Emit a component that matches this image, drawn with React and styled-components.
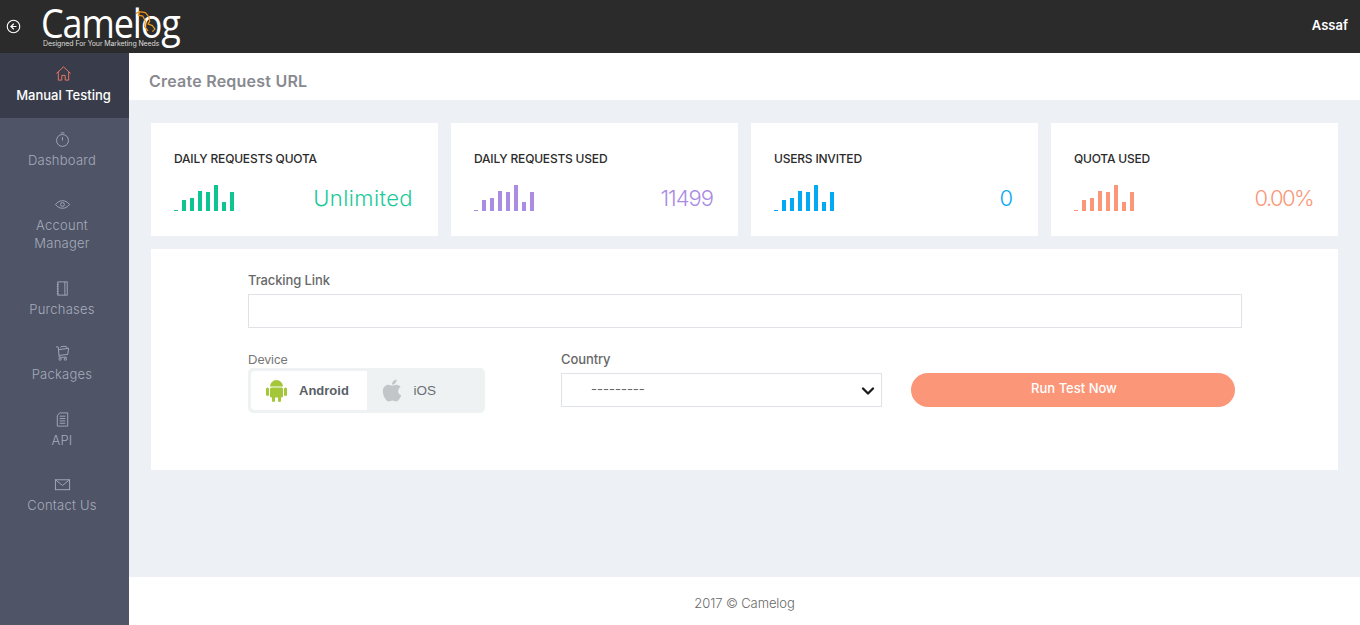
import styled, { createGlobalStyle } from "styled-components";
import { CircleArrowLeft, ChevronDown } from "lucide-react";
import { FaApple } from "react-icons/fa";

const font = `Inter, "Noto Sans", "Liberation Sans", sans-serif`;

const icons = {
  home: (
    <>
      <path d="M1.5 9 9 2l7.5 7" />
      <path d="M3.5 7.5V16h3.7v-5h3.6v5h3.7V7.5" />
    </>
  ),
  watch: (
    <>
      <circle cx="9" cy="10" r="6.3" />
      <path d="M7 2h4M9 6.5V10" />
    </>
  ),
  eye: (
    <>
      <path d="M1.5 9C4 6 6.500 5 9 5s5 1 7.500 4c-2.500 3-5 4-7.500 4s-5-1-7.500-4Z" />
      <circle cx="9" cy="9" r="2" />
    </>
  ),
  book: (
    <>
      <rect x="4" y="2" width="10" height="14" />
      <path d="M11.500 2v14M3 4.500h2M3 7h2M3 9.500h2M3 12h2M3 14.500h2" />
    </>
  ),
  cart: (
    <>
      <path d="M2 2h2.500l1 11h8" />
      <path d="M4.700 5 15.500 3.500l-1 6.500-9 1" />
      <path d="M7 3 8 1.500h5L14 3.500" />
      <circle cx="6.500" cy="15" r="1.200" />
      <circle cx="12" cy="15" r="1.200" />
    </>
  ),
  doc: (
    <>
      <path d="M6 2h8.500v14h-11V5Z" />
      <path d="M6 5.500h6M6 8h6M6 10.500h6M6 13h6" />
    </>
  ),
  mail: (
    <>
      <rect x="1.500" y="4" width="15" height="10.500" />
      <path d="M1.500 4 9 10l7.500-6" />
    </>
  ),
};

const menu = [
  { icon: "home", label: "Manual Testing", active: true },
  { icon: "watch", label: "Dashboard" },
  { icon: "eye", label: "Account Manager" },
  { icon: "book", label: "Purchases" },
  { icon: "cart", label: "Packages" },
  { icon: "doc", label: "API" },
  { icon: "mail", label: "Contact Us" },
];

const stats = [
  { title: "DAILY REQUESTS QUOTA", value: "Unlimited", bar: "#0fc491", text: "#1bc99a", spacing: 0.4 },
  { title: "DAILY REQUESTS USED", value: "11499", bar: "#ab8ce4", text: "#ab8ce4", spacing: -1 },
  { title: "USERS INVITED", value: "0", bar: "#03a9f3", text: "#03a9f3", spacing: 0 },
  { title: "QUOTA USED", value: "0.00%", bar: "#fb9678", text: "#fb9678", spacing: -1.6 },
];

const barHeights = [1, 11, 13, 20, 19, 26, 9, 19];

export default function App() {
  return (
    <>
      <GlobalStyle />
      <Header>
        <BackButton>
          <CircleArrowLeft size={15} strokeWidth={1.8} />
        </BackButton>
        <Logo>
          <LogoName>Camelog</LogoName>
          <LogoTag>Designed For Your Marketing Needs</LogoTag>
          <LogoMark viewBox="0 0 30 30">
            <path d="M1 4 5 2l7 1 4 5 1 5-2 3 5 2 3 4-3 3" />
            <path d="M5 2 4 6l5 1 3 6-1 6 4 5" />
          </LogoMark>
        </Logo>
        <UserName>Assaf</UserName>
      </Header>
      <Body>
        <Sidebar>
          {menu.map((m) => (
            <MenuItem key={m.label} $active={m.active}>
              <MenuIcon viewBox="0 0 18 18" $active={m.active}>
                {icons[m.icon]}
              </MenuIcon>
              <MenuLabel $active={m.active}>{m.label}</MenuLabel>
            </MenuItem>
          ))}
        </Sidebar>
        <Main>
          <TitleBar>
            <PageTitle>Create Request URL</PageTitle>
          </TitleBar>
          <Content>
            <StatGrid>
              {stats.map((s) => (
                <StatCard key={s.title}>
                  <StatTitle>{s.title}</StatTitle>
                  <StatRow>
                    <Bars>
                      {barHeights.map((h, i) => (
                        <Bar key={i} $color={s.bar} style={{ height: h }} />
                      ))}
                    </Bars>
                    <StatValue $color={s.text} $spacing={s.spacing}>
                      {s.value}
                    </StatValue>
                  </StatRow>
                </StatCard>
              ))}
            </StatGrid>
            <FormCard>
              <FieldLabel>Tracking Link</FieldLabel>
              <TextInput />
              <FormRow>
                <DeviceCol>
                  <DeviceLabel>Device</DeviceLabel>
                  <DeviceToggle>
                    <DeviceTab $active>
                      <AndroidIcon viewBox="0 0 21 23">
                        <path d="M4 7.500a6.500 6.500 0 0 1 13 0Z" />
                        <rect x="4" y="8.500" width="13" height="10" rx="1.500" />
                        <rect x="0" y="8.500" width="3" height="8.500" rx="1.500" />
                        <rect x="18" y="8.500" width="3" height="8.500" rx="1.500" />
                        <rect x="6" y="16" width="3" height="7" rx="1.500" />
                        <rect x="12" y="16" width="3" height="7" rx="1.500" />
                      </AndroidIcon>
                      <span>Android</span>
                    </DeviceTab>
                    <DeviceTab>
                      <AppleIcon />
                      <span>iOS</span>
                    </DeviceTab>
                  </DeviceToggle>
                </DeviceCol>
                <CountryCol>
                  <FieldLabel>Country</FieldLabel>
                  <SelectWrap>
                    <CountrySelect defaultValue="">
                      <option value="">---------</option>
                    </CountrySelect>
                    <SelectArrow>
                      <ChevronDown size={20} strokeWidth={2.8} />
                    </SelectArrow>
                  </SelectWrap>
                </CountryCol>
                <RunButton>Run Test Now</RunButton>
              </FormRow>
            </FormCard>
          </Content>
          <Footer>2017 © Camelog</Footer>
        </Main>
      </Body>
    </>
  );
}

const GlobalStyle = createGlobalStyle`
  html, body {
    margin: 0;
    height: 100%;
    overflow: hidden;
  }
  body {
    font-family: ${font};
    background: #edf1f5;
  }
  * {
    box-sizing: border-box;
  }
`;

const Header = styled.header`
  display: flex;
  align-items: center;
  height: 53px;
  background: #2b2b2b;
  color: #fff;
  padding: 0 12px 0 6px;
`;

const BackButton = styled.div`
  display: flex;
  width: 15px;
  margin-right: 20px;
`;

const Logo = styled.div`
  position: relative;
  display: flex;
  flex-direction: column;
  width: 140px;
  height: 53px;
`;

const LogoName = styled.div`
  font-family: "Open Sans", sans-serif;
  font-weight: 400;
  font-size: 36px;
  line-height: 30px;
  letter-spacing: -1.1px;
  margin-top: 9px;
  height: 30px;
  white-space: nowrap;
  transform: scaleY(1.09);
`;

const LogoTag = styled.div`
  font-size: 7px;
  line-height: 8px;
  white-space: nowrap;
  letter-spacing: -0.1px;
  color: #ddd;
  margin: 1px 0 0 2px;
`;

const LogoMark = styled.svg`
  position: absolute;
  left: 94px;
  top: 10px;
  width: 26px;
  height: 26px;
  fill: none;
  stroke: #e8961e;
  stroke-width: 1.4;
`;

const UserName = styled.div`
  margin-left: auto;
  margin-bottom: 4px;
  font-size: 13px;
  font-weight: 600;
`;

const Body = styled.div`
  display: flex;
  height: 572px;
`;

const Sidebar = styled.nav`
  width: 129px;
  flex-shrink: 0;
  background: #4f5467;
`;

const MenuItem = styled.div`
  display: flex;
  flex-direction: column;
  align-items: center;
  padding: ${(p) => (p.$active ? "12px 7px 14px 5px" : "13px 14px 14.4px 9px")};
  background: ${(p) => (p.$active ? "#393d4b" : "transparent")};
`;

const MenuIcon = styled.svg`
  width: 17px;
  height: 17px;
  fill: none;
  stroke: ${(p) => (p.$active ? "#f07a62" : "#a3a9b8")};
  stroke-width: 1;
`;

const MenuLabel = styled.div`
  margin-top: ${(p) => (p.$active ? "4px" : "3px")};
  text-align: center;
  font-size: 13px;
  line-height: 18px;
  letter-spacing: ${(p) => (p.$active ? "0" : "0.25px")};
  font-weight: ${(p) => (p.$active ? 500 : 300)};
  color: ${(p) => (p.$active ? "#fff" : "#a6acbb")};
`;

const Main = styled.main`
  flex: 1;
  display: flex;
  flex-direction: column;
  min-width: 0;
`;

const TitleBar = styled.div`
  display: flex;
  align-items: center;
  height: 47px;
  padding: 8px 20px 0;
  background: #fff;
`;

const PageTitle = styled.h1`
  margin: 0;
  font-size: 16px;
  font-weight: 600;
  letter-spacing: 0.23px;
  color: #888a90;
`;

const Content = styled.div`
  flex: 1;
  padding: 23px 22px 0;
  background: #edf1f5;
`;

const StatGrid = styled.div`
  display: grid;
  grid-template-columns: repeat(4, 1fr);
  gap: 13px;
`;

const StatCard = styled.div`
  height: 113px;
  padding: 28px 25px 0 23px;
  background: #fff;
`;

const StatTitle = styled.div`
  font-size: 12px;
  line-height: 15px;
  font-weight: 500;
  letter-spacing: -0.2px;
  color: #2b2b2b;
`;

const StatRow = styled.div`
  display: flex;
  align-items: flex-end;
  justify-content: space-between;
  margin-top: 15px;
`;

const Bars = styled.div`
  display: flex;
  align-items: flex-end;
  gap: 4px;
  height: 26px;
`;

const Bar = styled.span`
  width: 4px;
  background: ${(p) => p.$color};
`;

const StatValue = styled.div`
  font-size: 22px;
  line-height: 34px;
  margin-bottom: -4px;
  font-weight: 300;
  letter-spacing: ${(p) => p.$spacing}px;
  color: ${(p) => p.$color};
`;

const FormCard = styled.section`
  height: 221px;
  margin-top: 13px;
  padding: 23px 96px 0 97px;
  background: #fff;
`;

const FieldLabel = styled.label`
  display: block;
  font-size: 13px;
  line-height: 17px;
  font-weight: 500;
  letter-spacing: -0.1px;
  color: #686868;
  margin-bottom: 5px;
`;

const TextInput = styled.input`
  display: block;
  width: 100%;
  height: 34px;
  border: 1px solid #dfe2e6;
  background: #fff;
  outline: none;
`;

const FormRow = styled.div`
  display: flex;
  align-items: flex-start;
  margin-top: 23px;
`;

const DeviceCol = styled.div`
  width: 313px;
  flex-shrink: 0;
`;

const DeviceLabel = styled.div`
  font-family: "Liberation Sans", sans-serif;
  font-size: 13px;
  line-height: 17px;
  color: #777;
`;

const DeviceToggle = styled.div`
  display: flex;
  width: 237px;
  height: 45px;
  padding: 3px;
  border-radius: 5px;
  background: #eef2f3;
`;

const DeviceTab = styled.div`
  display: flex;
  align-items: center;
  gap: 12px;
  width: 116px;
  padding-left: 15px;
  border-radius: 4px 0 0 4px;
  font-family: "Liberation Sans", sans-serif;
  font-size: ${(p) => (p.$active ? "13px" : "13.5px")};
  font-weight: ${(p) => (p.$active ? 700 : 400)};
  color: ${(p) => (p.$active ? "#5a5f66" : "#6b6f75")};
  background: ${(p) => (p.$active ? "#fff" : "transparent")};
`;

const AndroidIcon = styled.svg`
  width: 21px;
  height: 23px;
  fill: #a4c639;
`;

const AppleIcon = styled(FaApple)`
  width: 20px;
  height: 25px;
  color: #c2c6c8;
`;

const CountryCol = styled.div`
  width: 321px;
  flex-shrink: 0;
  margin-right: 29px;
`;

const SelectWrap = styled.div`
  position: relative;
`;

const CountrySelect = styled.select`
  display: block;
  width: 100%;
  height: 34px;
  padding: 0 0 2px 29px;
  appearance: none;
  border: 1px solid #dfe2e6;
  border-radius: 0;
  background: #fff;
  font-family: ${font};
  font-size: 13px;
  color: #666;
  outline: none;
`;

const SelectArrow = styled.span`
  position: absolute;
  right: 4px;
  top: 8px;
  display: flex;
  color: #1b1b1b;
  pointer-events: none;
`;

const RunButton = styled.button`
  width: 324px;
  height: 34px;
  margin-top: 22px;
  padding: 0 0 4px 2px;
  border: none;
  border-radius: 17px;
  background: #fc9678;
  color: #fff;
  font-family: ${font};
  font-size: 13px;
  font-weight: 500;
`;

const Footer = styled.footer`
  display: flex;
  align-items: center;
  justify-content: center;
  height: 48px;
  padding-top: 4px;
  background: #fff;
  font-size: 13px;
  font-weight: 300;
  letter-spacing: -0.1px;
  color: #686868;
`;
